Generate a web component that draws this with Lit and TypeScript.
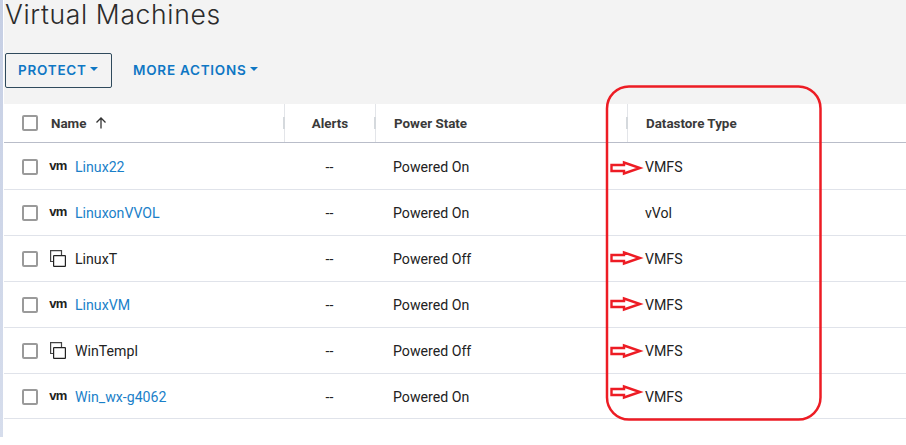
import { LitElement, html, css, svg } from "lit";
import { customElement } from "lit/decorators.js";

type Vm = { name: string; kind: "vm" | "template"; power: string; store: string; arrow?: number };

const ROWS: Vm[] = [
  { name: "Linux22", kind: "vm", power: "Powered On", store: "VMFS", arrow: 168 },
  { name: "LinuxonVVOL", kind: "vm", power: "Powered On", store: "vVol" },
  { name: "LinuxT", kind: "template", power: "Powered Off", store: "VMFS", arrow: 258 },
  { name: "LinuxVM", kind: "vm", power: "Powered On", store: "VMFS", arrow: 304 },
  { name: "WinTempl", kind: "template", power: "Powered Off", store: "VMFS", arrow: 351 },
  { name: "Win_wx-g4062", kind: "vm", power: "Powered On", store: "VMFS", arrow: 392 },
];

@customElement("app-root")
export class AppRoot extends LitElement {
  static styles = css`
    :host {
      display: block;
      position: relative;
      width: 906px;
      height: 445px;
      overflow: hidden;
      background: #fff;
      font-family: Roboto, "Liberation Sans", sans-serif;
    }
    .page {
      margin-left: 4px;
    }
    .strip {
      position: absolute;
      left: 0;
      top: 0;
      width: 3px;
      height: 437px;
      background: linear-gradient(#c6cfe4, #d6ddec);
    }
    .top {
      background: #f3f3f3;
      height: 104px;
      box-sizing: border-box;
      padding: 0 0 0 1px;
    }
    h1 {
      margin: 0;
      height: 53px;
      font: 300 26.5px/28px Inter, Lato, sans-serif;
      letter-spacing: 0.65px;
      color: #2b2b2b;
    }
    .actions {
      display: flex;
      align-items: center;
      gap: 21px;
    }
    .btn {
      display: flex;
      align-items: center;
      gap: 3px;
      height: 35px;
      font: 600 13.5px/1 Inter, Lato, sans-serif;
      letter-spacing: 0.75px;
      color: #0f77c4;
    }
    .btn.outline {
      box-sizing: border-box;
      width: 107px;
      padding-left: 12px;
      border: 1px solid #2f4a5c;
      border-radius: 2px;
    }
    .caret {
      width: 0;
      height: 0;
      margin-bottom: 3px;
      border-left: 4px solid transparent;
      border-right: 4px solid transparent;
      border-top: 4px solid #0f77c4;
    }
    .row {
      display: grid;
      grid-template-columns: 280px 91px 252px 1fr;
      align-items: center;
      height: 46px;
      box-sizing: border-box;
      border-bottom: 1px solid #e0e3ea;
      font-size: 14.15px;
      color: #222;
    }
    .row.head {
      height: 39px;
      border-bottom: 1px solid #b9bdc9;
      font-size: 13.4px;
      font-weight: 700;
      color: #3a3a3a;
    }
    .row.first {
      height: 47px;
    }
    .row:last-child {
      height: 45px;
    }
    .first .cell,
    .row:last-child .cell {
      padding-top: 1px;
    }
    .cell {
      display: flex;
      align-items: center;
      height: 100%;
      box-sizing: border-box;
      padding-left: 18px;
    }
    .head .cell {
      position: relative;
      border-left: 1px solid #e3e5e9;
    }
    .head .cell:first-child {
      border-left: 0;
    }
    .head .cell:not(:first-child)::before {
      content: "";
      position: absolute;
      left: -2px;
      top: 13px;
      width: 2px;
      height: 12px;
      background: #d5d9dd;
    }
    .alerts {
      justify-content: center;
      padding-left: 0;
    }
    .box {
      flex: none;
      width: 16px;
      height: 16px;
      box-sizing: border-box;
      border: 2px solid #9a9a9a;
      border-radius: 2px;
      background: #fff;
      margin-right: 12px;
    }
    .head .box {
      margin-right: 13px;
    }
    .sort {
      margin-left: 9px;
    }
    .ico {
      flex: none;
      display: flex;
      justify-content: center;
      width: 16px;
      margin-right: 9px;
    }
    .vm {
      font: 700 13px/1 "Liberation Sans", sans-serif;
      letter-spacing: -0.7px;
      color: #222;
      margin-top: -3px;
    }
    a {
      color: #1a7fc9;
      text-decoration: none;
    }
    .note {
      position: absolute;
      left: 0;
      top: 0;
      pointer-events: none;
    }
  `;

  private arrow(y: number) {
    return svg`<path d="M611.5 ${y - 3}H624V${y - 5.5}L640 ${y}L624 ${y + 5.5}V${y + 3}H611.5Z"
      fill="#fff" stroke="#ed1c24" stroke-width="2.4"/>`;
  }

  private renderIcon(kind: Vm["kind"]) {
    if (kind === "vm") return html`<span class="ico vm">vm</span>`;
    return html`<span class="ico">
      <svg width="16" height="17" viewBox="0 0 16 17" fill="none" stroke-width="1.2">
        <path d="M3 11.5H.6V.6H11.5V5" stroke="#444"/>
        <rect x="3.6" y="5.6" width="11.8" height="10.8" rx="0.5" stroke="#222"/>
      </svg>
    </span>`;
  }

  render() {
    return html`
      <div class="strip"></div>
      <div class="page">
        <div class="top">
          <h1>Virtual Machines</h1>
          <div class="actions">
            <div class="btn outline">PROTECT<span class="caret"></span></div>
            <div class="btn">MORE ACTIONS<span class="caret"></span></div>
          </div>
        </div>
        <div class="row head">
          <div class="cell">
            <span class="box"></span>Name
            <svg class="sort" width="12" height="12" viewBox="0 0 12 12" fill="none" stroke="#333" stroke-width="1.3">
              <path d="M6 11.5V1M1.5 5.5L6 1L10.5 5.5"/>
            </svg>
          </div>
          <div class="cell alerts">Alerts</div>
          <div class="cell">Power State</div>
          <div class="cell">Datastore Type</div>
        </div>
        ${ROWS.map(
          (r, i) => html`
            <div class="row ${i === 0 ? "first" : ""}">
              <div class="cell">
                <span class="box"></span>
                ${this.renderIcon(r.kind)}
                ${r.kind === "vm" ? html`<a href="#">${r.name}</a>` : r.name}
              </div>
              <div class="cell alerts">--</div>
              <div class="cell">${r.power}</div>
              <div class="cell">${r.store}</div>
            </div>
          `
        )}
      </div>
      <svg class="note" width="906" height="445" fill="none">
        <rect x="607" y="86.5" width="213.5" height="333" rx="22" stroke="#ed1c24" stroke-width="2.5"/>
        ${ROWS.filter((r) => r.arrow).map((r) => this.arrow(r.arrow!))}
      </svg>
    `;
  }
}
